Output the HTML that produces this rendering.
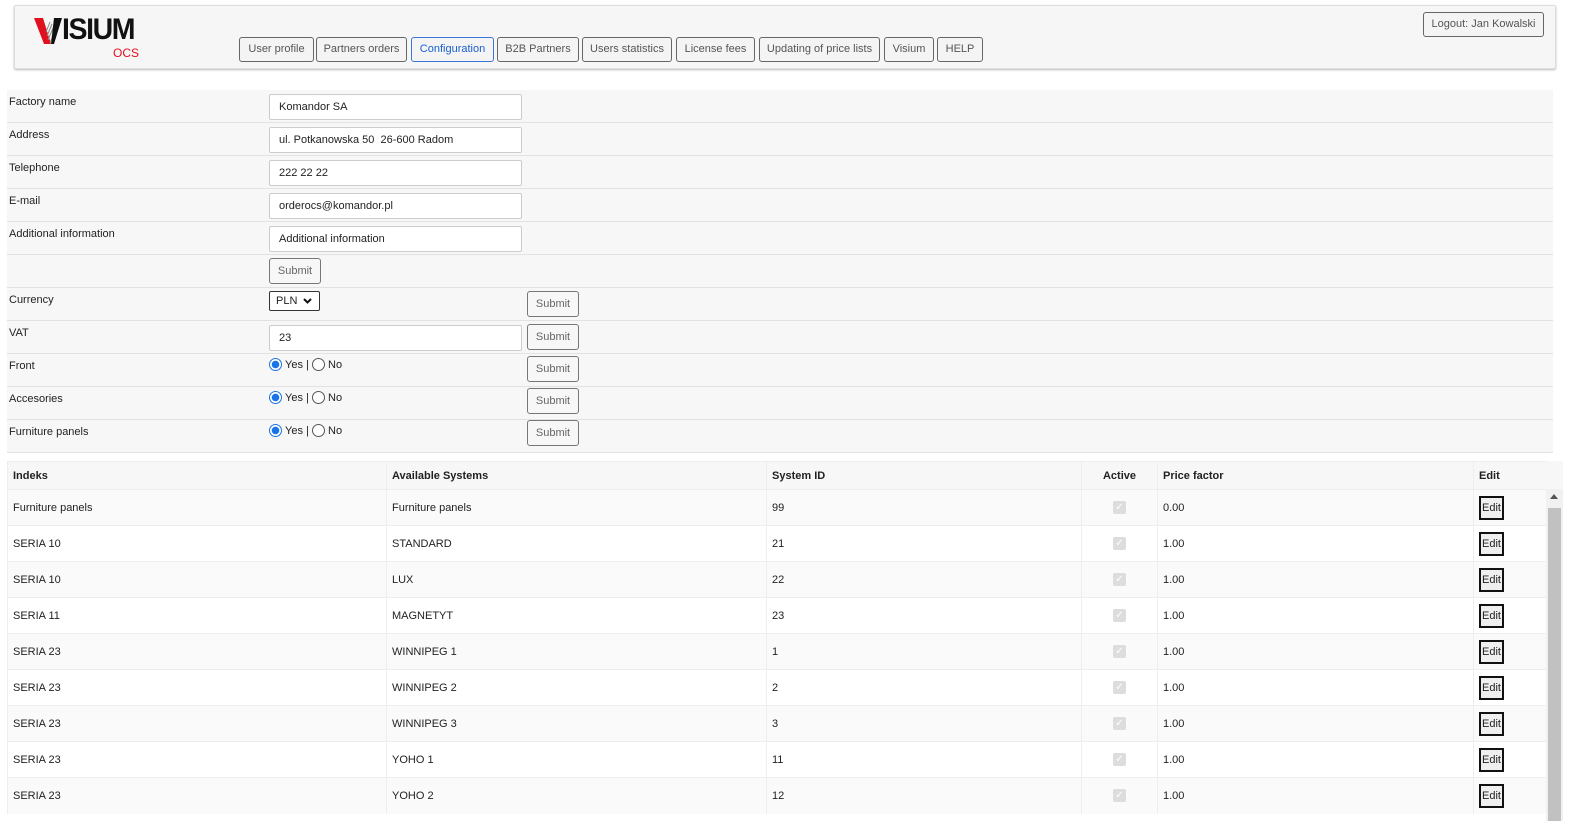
<!DOCTYPE html>
<html><head><meta charset="utf-8"><style>
*{box-sizing:border-box}
body{margin:0;width:1593px;height:821px;overflow:hidden;background:#fff;font-family:"Liberation Sans",Arial,sans-serif;font-size:11px;color:#222;position:relative}
.hdr{position:absolute;left:14px;top:5px;width:1542px;height:64px;background:#f6f6f6;border:1px solid #ddd;box-shadow:0 1px 2px #bbb;border-radius:2px}
.btn{position:absolute;height:25px;border:1px solid #666;border-radius:3px;background:#f4f4f4;color:#555;font-size:11px;line-height:23px;text-align:center}
.row{position:absolute;left:7px;width:1546px;height:33px;background:#f7f7f7;border-bottom:1px solid #e2e2e2}
.row .l{position:absolute;left:2px;top:6px}
.inp{position:absolute;left:262px;top:4px;width:253px;height:26px;border:1px solid #ccc;border-radius:2px;background:#fff;padding-left:9px;line-height:24px}
.sub{position:absolute;width:52px;height:26px;border:1px solid #777;border-radius:3px;background:#f7f7f7;color:#666;text-align:center;line-height:24px}
.rad{position:absolute;left:262px;top:4px;display:flex;align-items:center}
.rb{width:13px;height:13px;border-radius:50%;border:1px solid #555;background:#fff;display:inline-block}
.rb.on{border:1px solid #1a73e8;background:radial-gradient(circle,#1a73e8 0 3.5px,#fff 4px)}
table{position:absolute;left:7px;top:461px;border-collapse:collapse;width:1539px}
td,th{border-left:1px solid #eee;height:36px;padding:0 5px;font-size:11px;text-align:left;border-top:1px solid #eee}
th{height:28px;background:#f7f7f7;font-weight:bold;color:#222}
tr:nth-child(even) td{background:#fafafa}
.ck{display:inline-block;width:13px;height:13px;background:#ddd;border-radius:2px;color:#fff;font-size:10px;line-height:13px;text-align:center}
.ed{display:inline-block;border:2px solid #111;background:#efefef;padding:2px 1px;line-height:16px;font-size:11px}
</style></head><body>
<div class="hdr"></div>
<svg style="position:absolute;left:34px;top:16px" width="30" height="30" viewBox="0 0 30 30">
<polygon points="0,2 9,2 17,28 10,28" fill="#e0101e"/>
<g stroke="#888" stroke-width="1"><line x1="12" y1="16" x2="16" y2="6"/><line x1="13" y1="20" x2="18" y2="8"/><line x1="14" y1="24" x2="20" y2="10"/><line x1="16" y1="27" x2="22" y2="12"/><line x1="18" y1="28" x2="24" y2="10"/></g>
<polygon points="20,2 28,2 20,28 17,28" fill="#111"/>
</svg>
<div style="position:absolute;left:62px;top:14px;font-weight:bold;font-size:30px;letter-spacing:-1.5px;line-height:32px;color:#111;transform:scaleX(0.95);transform-origin:left">ISIUM</div>
<div style="position:absolute;left:113px;top:46px;color:#e0101e;font-size:12px">OCS</div>
<div class="btn" style="left:239px;top:37px;width:75px">User profile</div>
<div class="btn" style="left:316px;top:37px;width:91px">Partners orders</div>
<div class="btn" style="left:411px;top:37px;width:83px;color:#1a5fd0;border-color:#3a78d8">Configuration</div>
<div class="btn" style="left:497px;top:37px;width:82px">B2B Partners</div>
<div class="btn" style="left:582px;top:37px;width:90px">Users statistics</div>
<div class="btn" style="left:676px;top:37px;width:79px">License fees</div>
<div class="btn" style="left:759px;top:37px;width:121px">Updating of price lists</div>
<div class="btn" style="left:884px;top:37px;width:50px">Visium</div>
<div class="btn" style="left:937px;top:37px;width:46px">HELP</div>
<div class="btn" style="left:1423px;top:12px;width:121px">Logout: Jan Kowalski</div>

<div class="row" style="top:90px"><span class="l">Factory name</span><div class="inp">Komandor SA</div></div>
<div class="row" style="top:123px"><span class="l">Address</span><div class="inp">ul. Potkanowska 50&nbsp; 26-600 Radom</div></div>
<div class="row" style="top:156px"><span class="l">Telephone</span><div class="inp">222 22 22</div></div>
<div class="row" style="top:189px"><span class="l">E-mail</span><div class="inp">orderocs@komandor.pl</div></div>
<div class="row" style="top:222px"><span class="l">Additional information</span><div class="inp">Additional information</div></div>
<div class="row" style="top:255px"><div class="sub" style="left:262px;top:3px">Submit</div></div>
<div class="row" style="top:288px"><span class="l">Currency</span><div style="position:absolute;left:262px;top:3px;width:51px;height:20px;border:1px solid #333;border-radius:2px;background:#fff;padding-left:6px;line-height:18px">PLN <svg width="9" height="6" viewBox="0 0 9 6" style="margin-left:3px"><path d="M1 1 L4.5 4.5 L8 1" stroke="#111" stroke-width="2" fill="none"/></svg></div><div class="sub" style="left:520px;top:3px">Submit</div></div>
<div class="row" style="top:321px"><span class="l">VAT</span><div class="inp">23</div><div class="sub" style="left:520px;top:3px">Submit</div></div>
<div class="row" style="top:354px"><span class="l">Front</span><div class="rad"><span class="rb on"></span>&nbsp;Yes |&nbsp;<span class="rb"></span>&nbsp;No</div><div class="sub" style="left:520px;top:2px">Submit</div></div>
<div class="row" style="top:387px"><span class="l">Accesories</span><div class="rad"><span class="rb on"></span>&nbsp;Yes |&nbsp;<span class="rb"></span>&nbsp;No</div><div class="sub" style="left:520px;top:1px">Submit</div></div>
<div class="row" style="top:420px"><span class="l">Furniture panels</span><div class="rad"><span class="rb on"></span>&nbsp;Yes |&nbsp;<span class="rb"></span>&nbsp;No</div><div class="sub" style="left:520px;top:0px">Submit</div></div>

<table>
<tr><th style="width:379px">Indeks</th><th style="width:380px">Available Systems</th><th style="width:315px">System ID</th><th style="width:76px;text-align:center">Active</th><th style="width:316px">Price factor</th><th>Edit</th></tr>
<tr><td>Furniture panels</td><td>Furniture panels</td><td>99</td><td style="text-align:center"><span class="ck">✓</span></td><td>0.00</td><td><span class="ed">Edit</span></td></tr>
<tr><td>SERIA 10</td><td>STANDARD</td><td>21</td><td style="text-align:center"><span class="ck">✓</span></td><td>1.00</td><td><span class="ed">Edit</span></td></tr>
<tr><td>SERIA 10</td><td>LUX</td><td>22</td><td style="text-align:center"><span class="ck">✓</span></td><td>1.00</td><td><span class="ed">Edit</span></td></tr>
<tr><td>SERIA 11</td><td>MAGNETYT</td><td>23</td><td style="text-align:center"><span class="ck">✓</span></td><td>1.00</td><td><span class="ed">Edit</span></td></tr>
<tr><td>SERIA 23</td><td>WINNIPEG 1</td><td>1</td><td style="text-align:center"><span class="ck">✓</span></td><td>1.00</td><td><span class="ed">Edit</span></td></tr>
<tr><td>SERIA 23</td><td>WINNIPEG 2</td><td>2</td><td style="text-align:center"><span class="ck">✓</span></td><td>1.00</td><td><span class="ed">Edit</span></td></tr>
<tr><td>SERIA 23</td><td>WINNIPEG 3</td><td>3</td><td style="text-align:center"><span class="ck">✓</span></td><td>1.00</td><td><span class="ed">Edit</span></td></tr>
<tr><td>SERIA 23</td><td>YOHO 1</td><td>11</td><td style="text-align:center"><span class="ck">✓</span></td><td>1.00</td><td><span class="ed">Edit</span></td></tr>
<tr><td>SERIA 23</td><td>YOHO 2</td><td>12</td><td style="text-align:center"><span class="ck">✓</span></td><td>1.00</td><td><span class="ed">Edit</span></td></tr>
</table>
<div style="position:absolute;left:1546px;top:461px;width:17px;height:28px;background:#f7f7f7"></div>
<div style="position:absolute;left:1546px;top:489px;width:17px;height:332px;background:#f1f1f1"></div>
<div style="position:absolute;left:1550px;top:494px;width:0;height:0;border-left:4px solid transparent;border-right:4px solid transparent;border-bottom:5px solid #555"></div>
<div style="position:absolute;left:1548px;top:508px;width:13px;height:313px;background:#c1c1c1"></div>
</body></html>
